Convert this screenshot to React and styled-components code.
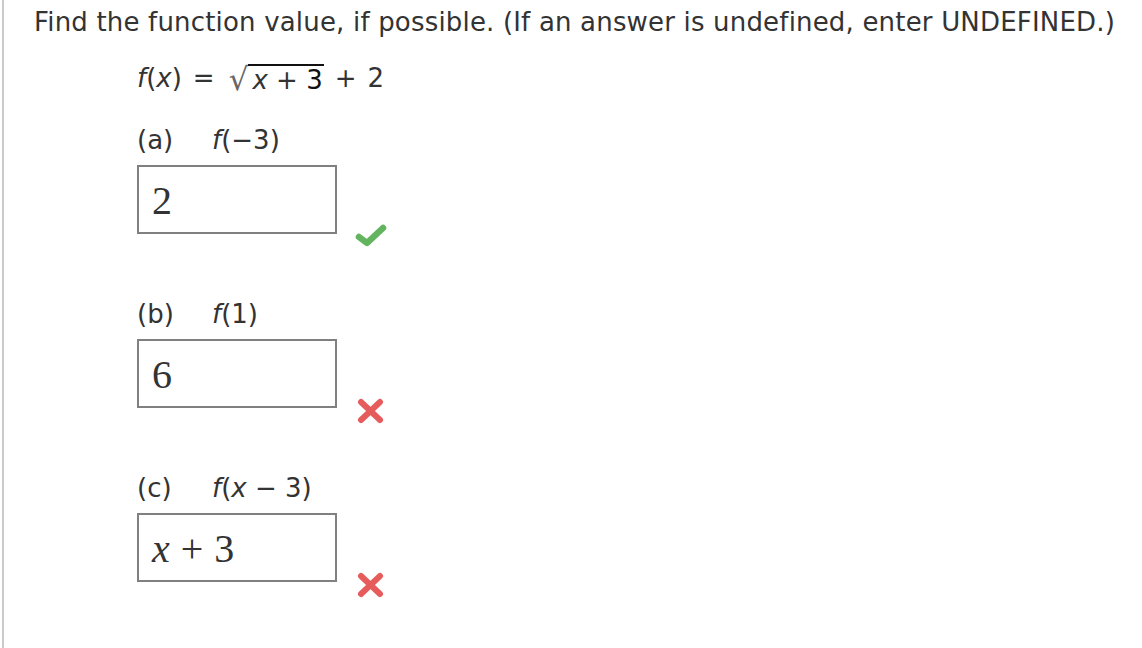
import React from "react";
import styled, { createGlobalStyle } from "styled-components";

const GlobalStyle = createGlobalStyle`
  html, body {
    margin: 0;
    padding: 0;
    background: #fff;
  }
  body {
    font-family: "DejaVu Sans", Verdana, sans-serif;
    color: #333;
  }
`;

const Page = styled.div`
  margin-left: 2px;
  min-height: 648px;
  border-left: 2px solid #cacaca;
  padding: 6px 0 0 30px;
  box-sizing: border-box;
`;

const Prompt = styled.div`
  font-size: 26px;
  line-height: 32px;
  letter-spacing: 0.18px;
  white-space: nowrap;
`;

const Body = styled.div`
  padding-left: 103px;
`;

const Formula = styled.div`
  display: flex;
  align-items: baseline;
  height: 32px;
  font-size: 26px;
  line-height: 32px;
  margin-top: 24px;
`;

const Italic = styled.span`
  font-style: italic;
`;

const Op = styled.span`
  margin: 0 11px;
`;

const Radical = styled.span`
  display: inline-flex;
  align-items: flex-end;
  align-self: flex-end;
`;

const RadSign = styled.span`
  font-size: 31px;
  line-height: 30px;
  color: #666;
  margin-left: 3px;
`;

const Radicand = styled.span`
  border-top: 2px solid #111;
  padding: 0 1px 0 4px;
  line-height: 28px;
`;

const Dark = styled.span`
  color: #111;
`;

const Part = styled.div`
  margin-top: ${(p) => p.top}px;
`;

const Label = styled.div`
  display: flex;
  font-size: 26px;
  line-height: 32px;
`;

const Letter = styled.span`
  width: 75px;
`;

const AnswerRow = styled.div`
  display: flex;
  align-items: flex-end;
  margin-top: 9px;
`;

const Box = styled.div`
  width: 200px;
  height: 69px;
  box-sizing: border-box;
  border: 2px solid #808080;
  display: flex;
  align-items: center;
  padding: 2px 0 0 13px;
  font-family: "Liberation Serif", "Times New Roman", serif;
  font-size: 40px;
  color: #333;
`;

const MathVar = styled.span`
  font-style: italic;
`;

const Plus = styled.span`
  margin: 0 11px;
`;

const Mark = styled.span`
  display: flex;
  margin-left: ${(p) => p.left}px;
  margin-bottom: ${(p) => p.drop}px;
`;

function Check() {
  return (
    <Mark left={18} drop={-14}>
      <svg width="32" height="26" viewBox="0 0 32 26">
        <path
          d="M4 15 L12 21 L28 6"
          fill="none"
          stroke="#62b45e"
          strokeWidth="6.5"
          strokeLinecap="round"
          strokeLinejoin="round"
        />
      </svg>
    </Mark>
  );
}

function Cross() {
  return (
    <Mark left={20} drop={-16}>
      <svg width="27" height="26" viewBox="0 0 27 26">
        <path
          d="M4 4 L23 22 M23 4 L4 22"
          fill="none"
          stroke="#e65c5c"
          strokeWidth="6"
          strokeLinecap="round"
        />
      </svg>
    </Mark>
  );
}

const parts = [
  { id: "a", top: 30, q: <><Italic>f</Italic>(−3)</>, a: "2", ok: true },
  { id: "b", top: 64, q: <><Italic>f</Italic>(1)</>, a: "6", ok: false },
  {
    id: "c",
    top: 64,
    q: <><Italic>f</Italic>(<Italic>x</Italic> − 3)</>,
    a: <><MathVar>x</MathVar><Plus>+</Plus>3</>,
    ok: false,
  },
];

export default function App() {
  return (
    <>
      <GlobalStyle />
      <Page>
        <Prompt>
          Find the function value, if possible. (If an answer is undefined, enter UNDEFINED.)
        </Prompt>
        <Body>
          <Formula>
            <Italic>f</Italic>(<Italic>x</Italic>)
            <Op>=</Op>
            <Radical>
              <RadSign>√</RadSign>
              <Radicand>
                <Italic>x</Italic> + <Dark>3</Dark>
              </Radicand>
            </Radical>
            <Op>+</Op>2
          </Formula>
          {parts.map((p) => (
            <Part key={p.id} top={p.top}>
              <Label>
                <Letter>({p.id})</Letter>
                <span>{p.q}</span>
              </Label>
              <AnswerRow>
                <Box>{p.a}</Box>
                {p.ok ? <Check /> : <Cross />}
              </AnswerRow>
            </Part>
          ))}
        </Body>
      </Page>
    </>
  );
}
